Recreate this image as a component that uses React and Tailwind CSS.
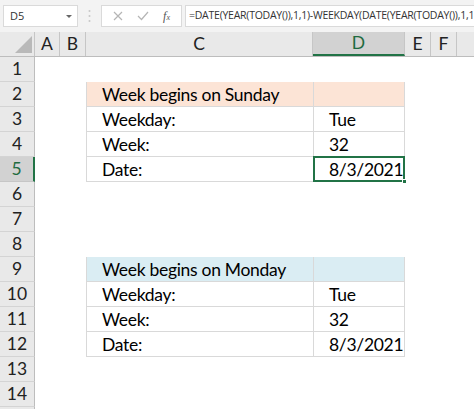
import React from "react";

const COLS = [
  { k: "A", w: "w-[25px]" },
  { k: "B", w: "w-[26px]" },
  { k: "C", w: "w-[227px]" },
  { k: "D", w: "w-[92px]" },
  { k: "E", w: "w-[26px]" },
  { k: "F", w: "w-[26px]" },
  { k: "G", w: "flex-1" },
];

const rows = [
  { n: 1 },
  { n: 2, c: "Week begins on Sunday", d: "", fill: "bg-[#fce4d6]", t: "top" },
  { n: 3, c: "Weekday:", d: "Tue", t: "mid" },
  { n: 4, c: "Week:", d: "32", t: "mid" },
  { n: 5, c: "Date:", d: "8/3/2021", t: "bot", sel: true },
  { n: 6 },
  { n: 7 },
  { n: 8 },
  { n: 9, c: "Week begins on Monday", d: "", fill: "bg-[#daedf3]", t: "top" },
  { n: 10, c: "Weekday:", d: "Tue", t: "mid" },
  { n: 11, c: "Week:", d: "32", t: "mid" },
  { n: 12, c: "Date:", d: "8/3/2021", t: "bot" },
  { n: 13 },
  { n: 14 },
  { n: 15 },
];

const font = { fontFamily: "Lato, 'Liberation Sans', sans-serif" };
const uiFont = { fontFamily: "'Open Sans', 'Liberation Sans', sans-serif" };

function Row({ r }) {
  const inTable = !!r.t;
  const sel = r.sel;
  return (
    <div className="flex h-[25px]">
      <div
        className={
          "w-[35px] shrink-0 flex items-center justify-center text-[17.5px] border-b " +
          (sel
            ? "bg-[#d2d2d2] text-[#1e6b40] border-r-2 border-r-[#217346] border-b-[#c6c6c6]"
            : "bg-[#e9e9e9] text-[#222] border-r border-r-[#bdbdbd] border-b-[#d4d4d4]")
        }
        style={font}
      >
        {r.n}
      </div>
      <div className="w-[25px] shrink-0" />
      <div className="w-[26px] shrink-0" />
      <div
        className={
          "w-[227px] shrink-0 flex items-center pt-[2px] pl-[15px] text-[17.5px] tracking-[-0.3px] text-black " +
          (inTable ? "border-l border-[#d9d9d9] border-b " : "") +
          (r.fill || "")
        }
        style={font}
      >
        {r.c}
      </div>
      <div
        className={
          "w-[92px] shrink-0 relative flex items-center pt-[2px] pl-[15px] text-[17.5px] tracking-[-0.3px] text-black whitespace-nowrap " +
          (inTable ? "border-l border-r border-b border-[#d9d9d9] " : "") +
          (r.fill || "")
        }
        style={font}
      >
        {r.d}
        {sel && (
          <>
            <div className="absolute left-[-1px] top-[-1px] right-[-1px] bottom-[-1px] border-2 border-[#217346]" />
            <div className="absolute right-[-3px] bottom-[-3px] w-[5px] h-[5px] bg-[#217346] border border-white" />
          </>
        )}
      </div>
      <div className="flex-1" />
    </div>
  );
}

export default function App() {
  return (
    <div className="w-[474px] h-[409px] overflow-hidden bg-white relative">
      {/* formula bar */}
      <div className="h-[32px] bg-[#f3f3f3] flex items-center gap-0 pl-[3px]" style={uiFont}>
        <div className="w-[75px] h-[22px] bg-white border border-[#dadada] flex items-center justify-between pl-[6px] pr-[4px]">
          <span className="text-[11px] text-[#333]">D5</span>
          <svg width="8" height="5" viewBox="0 0 8 5"><path d="M1 1 L4 4 L7 1 Z" fill="#666" /></svg>
        </div>
        <div className="w-[23px] flex justify-center">
          <svg width="3" height="14" viewBox="0 0 3 14">
            <circle cx="1.5" cy="2" r="1" fill="#c8c8c8" />
            <circle cx="1.5" cy="7" r="1" fill="#c8c8c8" />
            <circle cx="1.5" cy="12" r="1" fill="#c8c8c8" />
          </svg>
        </div>
        <div className="w-[81px] h-[22px] bg-white border border-[#dadada] flex items-center justify-around px-[4px]">
          <svg width="10" height="10" viewBox="0 0 10 10"><path d="M1 1 L9 9 M9 1 L1 9" stroke="#b5b5b5" strokeWidth="1.2" /></svg>
          <svg width="12" height="10" viewBox="0 0 12 10"><path d="M1 5 L4.5 8.5 L11 1" stroke="#b5b5b5" strokeWidth="1.2" fill="none" /></svg>
          <span className="italic text-[12px] text-[#555]" style={{ fontFamily: "'Liberation Serif', serif" }}>
            f<span className="text-[8px]">x</span>
          </span>
        </div>
        <div className="flex-1 min-w-0 h-[22px] ml-[3px] bg-white border border-[#dadada] border-r-0 flex items-center pl-[3px] overflow-hidden whitespace-nowrap">
          <span className="text-[10.5px] text-[#333] tracking-[-0.25px]">
            =DATE(YEAR(TODAY()),1,1)-WEEKDAY(DATE(YEAR(TODAY()),1,1)+6,3)
          </span>
        </div>
      </div>
      {/* column headers */}
      <div className="flex h-[25px] bg-[#e9e9e9] border-b border-[#bdbdbd]" style={font}>
        <div className="w-[35px] shrink-0 border-r border-[#c6c6c6] relative">
          <svg className="absolute left-[15px] top-[4px]" width="18" height="17" viewBox="0 0 18 17">
            <path d="M17 0 L17 17 L0 17 Z" fill="#b9b9b9" />
          </svg>
        </div>
        {COLS.map((c) => (
          <div
            key={c.k}
            className={
              c.w +
              " shrink-0 flex items-center justify-center text-[17.5px] " +
              (c.k === "D"
                ? "bg-[#d2d2d2] text-[#1e6b40] border-b-2 border-[#217346] border-r border-r-[#c6c6c6]"
                : c.k === "G"
                ? ""
                : "text-[#222] border-r border-[#c6c6c6]")
            }
          >
            {c.k === "G" ? "" : c.k}
          </div>
        ))}
      </div>
      {rows.map((r) => (
        <Row key={r.n} r={r} />
      ))}
    </div>
  );
}
